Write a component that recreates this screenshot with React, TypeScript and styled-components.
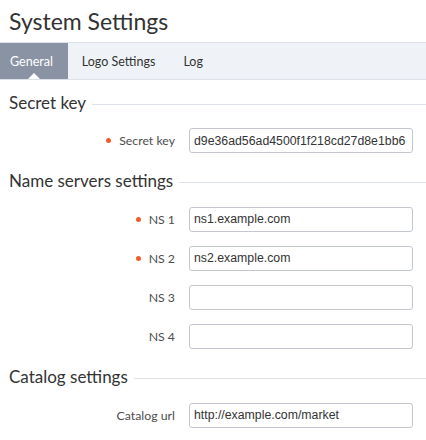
import styled, { createGlobalStyle } from "styled-components";

const GlobalStyle = createGlobalStyle`
  body {
    margin: 0;
    background: #fff;
    font-family: Lato, "Open Sans", sans-serif;
    color: #333;
  }
`;

const Page = styled.div`
  width: 426px;
`;

const Title = styled.h1`
  margin: 0;
  padding: 6px 9px 0;
  height: 37px;
  box-sizing: border-box;
  font-size: 23px;
  font-weight: 400;
  line-height: 30px;
  color: #333;
`;

const TabBar = styled.div`
  display: flex;
  height: 36px;
  margin-top: 5px;
  background: #eff3f7;
  border-top: 1px solid #dde2e8;
  border-bottom: 1px solid #dde2e8;
`;

const Tab = styled.div<{ $active?: boolean }>`
  position: relative;
  display: flex;
  align-items: center;
  padding: ${(p) => (p.$active ? "0 15px 0 10px" : "0 14px")};
  font-size: 12.5px;
  color: ${(p) => (p.$active ? "#fff" : "#333")};
  background: ${(p) => (p.$active ? "#8a93a3" : "transparent")};

  ${(p) =>
    p.$active &&
    `
    &::after {
      content: "";
      position: absolute;
      left: 50%;
      bottom: 0;
      margin-left: -6px;
      border: 6px solid transparent;
      border-bottom-color: #fff;
      border-top: 0;
    }
  `}
`;

const Form = styled.div`
  padding: 0 13px 0 9px;
`;

const Section = styled.fieldset`
  border: 0;
  margin: 0;
  padding: 0 0 5px;
`;

const Legend = styled.div`
  display: flex;
  align-items: center;
  gap: 6px;
  margin-right: -13px;
  font-size: 17px;
  line-height: 22px;
  color: #333;
  padding-top: 12px;

  &::after {
    content: "";
    flex: 1;
    height: 1px;
    background: #dde2e8;
    margin-top: 3px;
  }
`;

const Row = styled.div`
  display: grid;
  grid-template-columns: 166px 1fr;
  column-gap: 14px;
  align-items: center;
  margin-top: 14.3px;
`;

const Label = styled.label<{ $required?: boolean }>`
  display: flex;
  justify-content: flex-end;
  align-items: center;
  font-size: 12.3px;
  color: #4d4d4d;

  ${(p) =>
    p.$required &&
    `
    &::before {
      content: "";
      width: 5px;
      height: 5px;
      border-radius: 50%;
      background: #f15a2b;
      margin-right: 8px;
    }
  `}
`;

const Input = styled.input`
  box-sizing: border-box;
  width: 100%;
  height: 25px;
  padding: 0 4px;
  border: 1px solid #c3c8cf;
  border-radius: 3px;
  font-family: "Liberation Sans", Arial, sans-serif;
  font-size: 12.3px;
  color: #333;
  outline: none;
`;

type Field = { label: string; value: string; required?: boolean };

const sections: { title: string; fields: Field[] }[] = [
  {
    title: "Secret key",
    fields: [
      { label: "Secret key", value: "d9e36ad56ad4500f1f218cd27d8e1bb6", required: true },
    ],
  },
  {
    title: "Name servers settings",
    fields: [
      { label: "NS 1", value: "ns1.example.com", required: true },
      { label: "NS 2", value: "ns2.example.com", required: true },
      { label: "NS 3", value: "" },
      { label: "NS 4", value: "" },
    ],
  },
  {
    title: "Catalog settings",
    fields: [{ label: "Catalog url", value: "http://example.com/market" }],
  },
];

export default function App() {
  return (
    <Page>
      <GlobalStyle />
      <Title>System Settings</Title>
      <TabBar>
        <Tab $active>General</Tab>
        <Tab>Logo Settings</Tab>
        <Tab>Log</Tab>
      </TabBar>
      <Form>
        {sections.map((s) => (
          <Section key={s.title}>
            <Legend>{s.title}</Legend>
            {s.fields.map((f) => (
              <Row key={f.label}>
                <Label $required={f.required}>{f.label}</Label>
                <Input defaultValue={f.value} readOnly />
              </Row>
            ))}
          </Section>
        ))}
      </Form>
    </Page>
  );
}
